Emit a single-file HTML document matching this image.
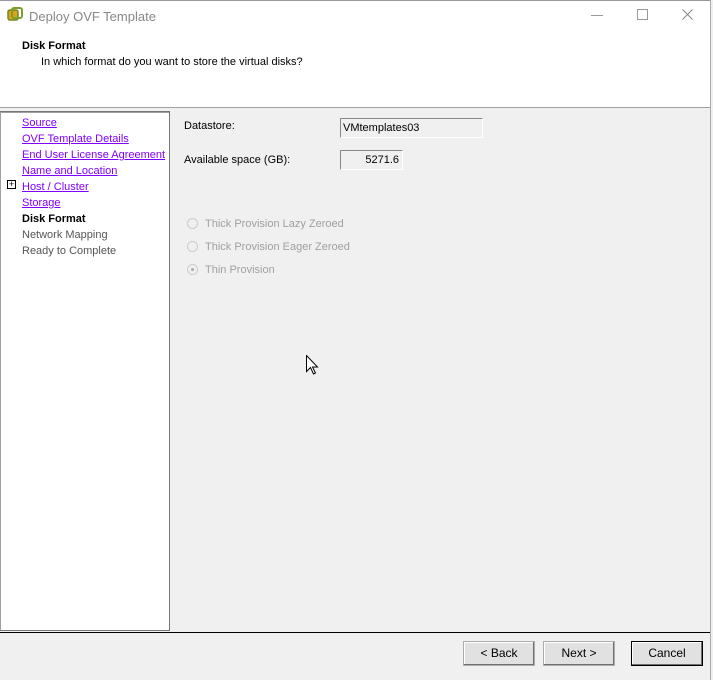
<!DOCTYPE html>
<html><head><style>
*{margin:0;padding:0;box-sizing:border-box}
body{width:713px;height:680px;background:#f0f0f0;font-family:"Liberation Sans",sans-serif;font-size:11px;position:relative;overflow:hidden;color:#000}
.abs{position:absolute}
a{color:#8000ff;text-decoration:underline}
.btn{position:absolute;top:641px;height:25px;background:#e1e1e1;border:1px solid #adadad;box-shadow:inset -1px -1px #707070,inset 1px 1px #fff;text-align:center;line-height:23px;font-size:12px;font-family:"Liberation Sans",sans-serif}
</style></head><body>
<div class="abs" style="left:0;top:0;width:711px;height:108px;background:#fff;border-top:1px solid #999"></div>
<div class="abs" style="left:710px;top:0;width:1px;height:680px;background:#aaa"></div>
<div class="abs" style="left:0;top:107px;width:710px;height:1px;background:#a0a0a0"></div>
<svg class="abs" style="left:7px;top:7px" width="16" height="16" viewBox="0 0 16 16"><rect x="1" y="3" width="10" height="10" rx="2" fill="#e0a020" stroke="#6a8a20" stroke-width="1.5"/><rect x="5" y="1" width="10" height="10" rx="2" fill="none" stroke="#7aa02a" stroke-width="2"/></svg>
<div class="abs" style="left:29px;top:9px;font-size:13px;color:#888">Deploy OVF Template</div>
<div class="abs" style="left:591px;top:15px;width:12px;height:1px;background:#999"></div>
<div class="abs" style="left:637px;top:9px;width:11px;height:11px;border:1px solid #999"></div>
<svg class="abs" style="left:682px;top:9px" width="11" height="11"><path d="M0.5 0.5L10.5 10.5M10.5 0.5L0.5 10.5" stroke="#888" stroke-width="1"/></svg>
<div class="abs" style="left:22px;top:40px;font-weight:bold">Disk Format</div>
<div class="abs" style="left:41px;top:56px">In which format do you want to store the virtual disks?</div>
<div class="abs" style="left:0;top:111px;width:170px;height:520px;background:#fff;border:1px solid #777;border-left:none;box-shadow:inset 1px 1px #a0a0a0"></div>
<div class="abs" style="left:22px;top:115px;line-height:16px">
<a>Source</a><br><a>OVF Template Details</a><br><a>End User License Agreement</a><br><a>Name and Location</a><br><a>Host / Cluster</a><br><a>Storage</a><br><b>Disk Format</b><br><span style="color:#555">Network Mapping</span><br><span style="color:#555">Ready to Complete</span></div>
<div class="abs" style="left:7px;top:180px;width:9px;height:9px;border:1px solid #000;font-size:9px;line-height:7px;text-align:center">+</div>
<div class="abs" style="left:184px;top:120px">Datastore:</div>
<div class="abs" style="left:184px;top:154px">Available space (GB):</div>
<div class="abs" style="left:340px;top:118px;width:143px;height:20px;border:1px solid;border-color:#888 #fff #fff #888;line-height:18px;padding-left:2px">VMtemplates03</div>
<div class="abs" style="left:340px;top:150px;width:63px;height:20px;border:1px solid;border-color:#888 #fff #fff #888;line-height:18px;text-align:right;padding-right:3px">5271.6</div>
<div class="abs" style="left:187px;top:213px;color:#a0a0a0;line-height:23px">
<div><span style="display:inline-block;width:11px;height:11px;border-radius:50%;border:1px solid #ccc;vertical-align:-2px;margin-right:7px"></span>Thick Provision Lazy Zeroed</div>
<div><span style="display:inline-block;width:11px;height:11px;border-radius:50%;border:1px solid #ccc;vertical-align:-2px;margin-right:7px"></span>Thick Provision Eager Zeroed</div>
<div><span style="display:inline-block;width:11px;height:11px;border-radius:50%;border:1px solid #ccc;vertical-align:-2px;margin-right:7px;position:relative"><span style="position:absolute;left:3px;top:3px;width:3px;height:3px;background:#aaa;border-radius:50%"></span></span>Thin Provision</div>
</div>
<svg class="abs" style="left:306px;top:355px" width="13" height="20"><path d="M0.5 0.5V16.5L4.5 12.5L7.5 19L9.5 18L6.5 12H11.5Z" fill="#fff" stroke="#000"/></svg>
<div class="abs" style="left:0;top:632px;width:710px;height:1px;background:#000"></div>
<div class="btn" style="left:463px;width:72px">&lt; Back</div>
<div class="btn" style="left:543px;width:72px">Next &gt;</div>
<div class="btn" style="left:631px;width:72px;border:1px solid #000">Cancel</div>
</body></html>
